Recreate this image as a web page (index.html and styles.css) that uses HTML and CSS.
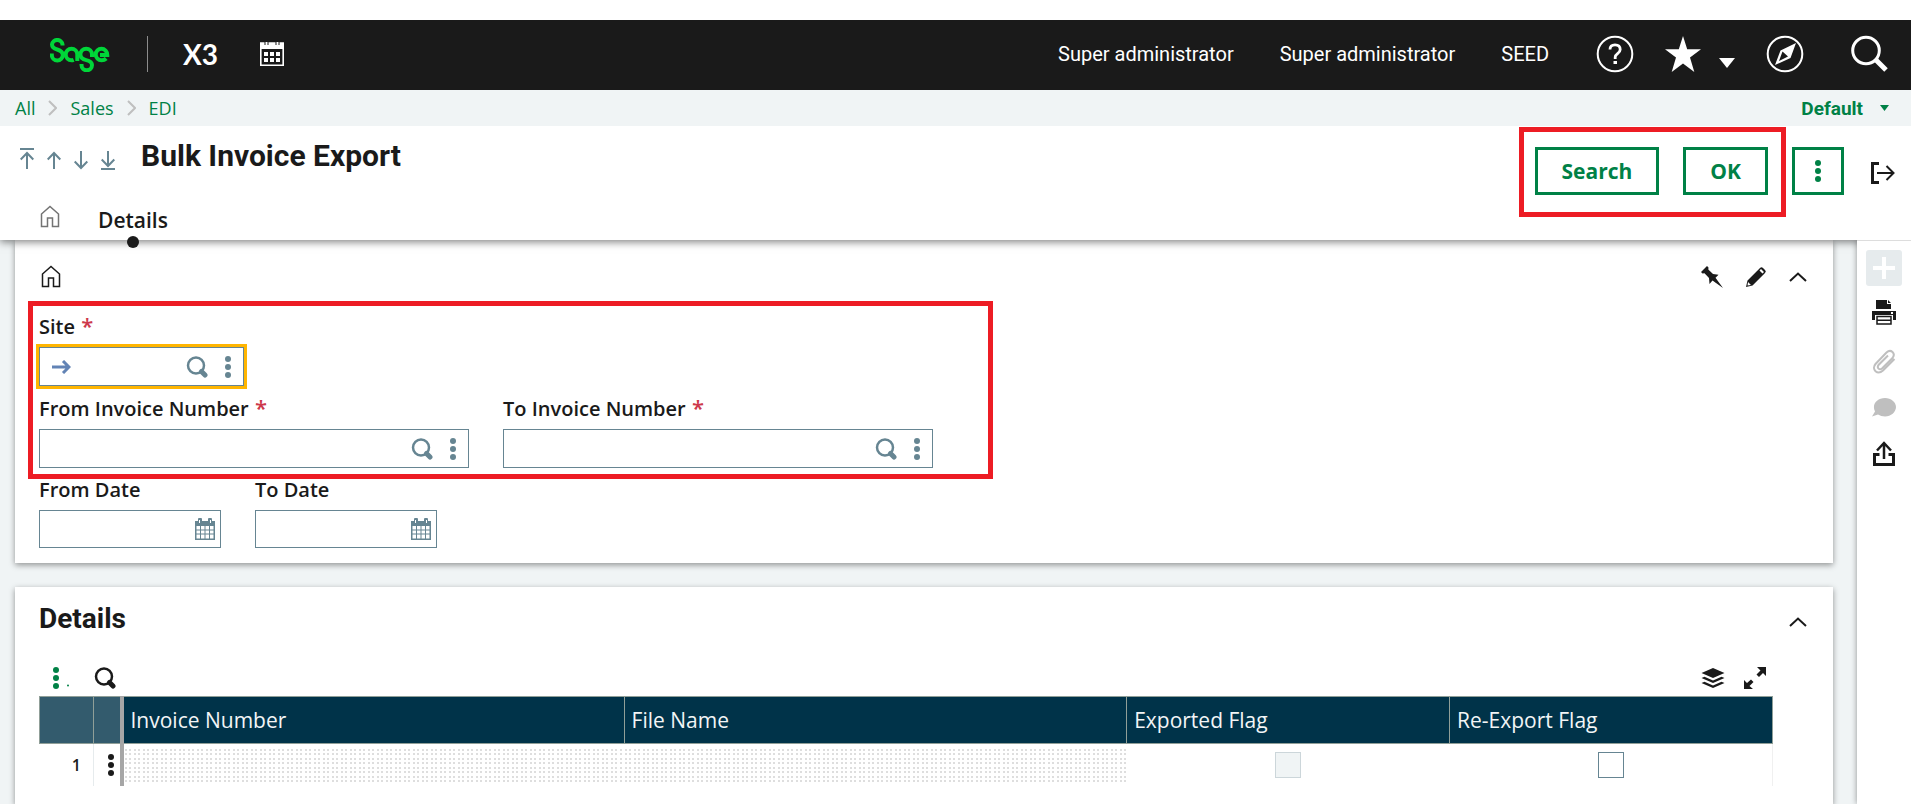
FILE: index.html
```html
<!DOCTYPE html>
<html lang="en">
<head>
  <meta charset="UTF-8" />
  <title>Bulk Invoice Export</title>
  <meta name="viewport" content="width=device-width, initial-scale=1" />
  <link rel="stylesheet" href="styles.css">
</head>
<body>

  <svg class="sprite" aria-hidden="true">
    <symbol id="i-dots" viewBox="0 0 6 22">
      <circle cx="3" cy="3" r="3" /><circle cx="3" cy="11" r="3" /><circle cx="3" cy="19" r="3" />
    </symbol>
    <symbol id="i-search" viewBox="0 0 22 22">
      <circle cx="10" cy="9.500" r="8" fill="none" stroke="currentColor" stroke-width="2.500" />
      <path d="M15.500 15.500l3.500 3.500" stroke="currentColor" stroke-width="5" stroke-linecap="round" />
    </symbol>
    <symbol id="i-calendar" viewBox="0 0 20 22">
      <path d="M0 3h3V1.500a1.500 1.500 0 0 1 4 0V3h6V1.500a1.500 1.500 0 0 1 4 0V3h3v19H0z" />
      <path d="M4.500 2v3M15.500 2v3" stroke="#fff" />
      <path d="M1.500 8h17v12.500h-17z" fill="#fff" />
      <path d="M1 12h18M1 16h18M5.500 8v13M10 8v13M14.500 8v13" stroke="currentColor" fill="none" />
    </symbol>
    <symbol id="i-home" viewBox="0 0 20 23">
      <path d="M1.500 21.500V9L10 1.500 18.500 9v12.500h-6V13h-5v8.500z" fill="none" stroke="currentColor" stroke-width="1.500" />
    </symbol>
    <symbol id="i-chevron" viewBox="0 0 18 10">
      <path d="M1 9l8-7.500L17 9" fill="none" stroke="currentColor" stroke-width="2" />
    </symbol>
  </svg>

  <header class="topbar">
    <svg class="logo" width="60" height="34" viewBox="0 0 60 34" role="img" aria-label="Sage">
      <path d="M12.500 7.500V6.500A5.300 5.300 0 0 0 2 6.500C2 9.500 4 10.500 7.200 11.500 10.500 12.500 12.800 14 12.800 17A5.500 5.500 0 0 1 1.800 17V15.500" />
      <path d="M27.300 23V16.500a5.800 5.800 0 1 0-5.800 5.800c.8 0 1.500-.2 2.200-.5" />
      <path d="M42 19v-2.500a5.800 5.800 0 0 0-11.600 0c0 3.500 2.500 5 5.800 5.600 3.500.8 5.800 2.200 5.800 5a5.200 5.200 0 0 1-10.500 0v-1" />
      <path d="M50 17h7.300c0-3.500-2.600-6.300-5.800-6.300a5.800 5.800 0 1 0 0 11.600c2 0 3.500-.6 4.700-1.800" />
    </svg>
    <span class="product">X3</span>
    <button class="icon-btn" type="button" aria-label="Calendar">
      <svg width="24" height="24" viewBox="0 0 24 24">
        <path d="M.8 1h22.400v22.200H.8z" fill="none" stroke="#fff" stroke-width="1.600" />
        <path d="M0 1h24v6H0z" />
        <path d="M6.500 0v3M17.500 0v3" stroke="#1a1a1a" stroke-width="4" />
        <path d="M6.500 0v3M17.500 0v3" stroke="#fff" stroke-width="2" />
        <path d="M4 10h4v4H4zM10 10h4v4h-4zM16 10h4v4h-4zM4 16h4v4H4zM10 16h4v4h-4zM16 16h4v4h-4z" />
      </svg>
    </button>
    <nav class="user-menu">
      <a href="#">Super administrator</a>
      <a href="#">Super administrator</a>
      <a href="#">SEED</a>
    </nav>
    <div class="top-icons">
      <button class="icon-btn" type="button" aria-label="Help">
        <svg width="38" height="38" viewBox="0 0 38 38" fill="none" stroke="#fff" stroke-width="2">
          <circle cx="19" cy="19" r="17.300" />
          <path d="M14 14.500c0-3.200 2-4.700 5-4.700s5.200 1.700 5.200 4.700c0 4-5 4-5 7.500v2" stroke-width="2.800" />
          <path d="M17.500 26h3.500v3h-3.500z" fill="#fff" stroke="none" />
        </svg>
      </button>
      <button class="icon-btn favourites" type="button" aria-label="Favourites">
        <svg width="36" height="36" viewBox="0 0 36 36">
          <path d="M18 0l4.200 13.300H36L25 21.500 29.300 36 18 27.500 6.700 36 11 21.500 0 13.300h13.800z" />
        </svg>
        <svg class="caret" width="16" height="10" viewBox="0 0 16 10"><path d="M0 0h16L8 10z" /></svg>
      </button>
      <button class="icon-btn" type="button" aria-label="Navigate">
        <svg width="38" height="38" viewBox="0 0 38 38">
          <circle cx="19" cy="19" r="17.300" fill="none" stroke="#fff" stroke-width="2" />
          <path d="M30 8L24.500 23 9 30 14.500 15.500zM22 21.500l-5.500-5L13 26z" fill-rule="evenodd" />
        </svg>
      </button>
      <button class="icon-btn search-all" type="button" aria-label="Search everywhere">
        <svg width="38" height="38" viewBox="0 0 38 38" fill="none" stroke="#fff">
          <circle cx="16" cy="15.500" r="13.300" stroke-width="3" />
          <path d="M26 25l10 10" stroke-width="5" />
        </svg>
      </button>
    </div>
  </header>

  <div class="crumb-bar">
    <nav class="crumbs" aria-label="Breadcrumb">
      <a href="#">All</a>
      <svg width="9" height="16" viewBox="0 0 9 16"><path d="M1 1l7 7-7 7" /></svg>
      <a href="#">Sales</a>
      <svg width="9" height="16" viewBox="0 0 9 16"><path d="M1 1l7 7-7 7" /></svg>
      <a href="#">EDI</a>
    </nav>
    <button class="view-btn" type="button">
      Default
      <svg width="9" height="6" viewBox="0 0 9 6"><path d="M0 0h9L4.500 6z" /></svg>
    </button>
  </div>

  <section class="page-header">
    <div class="title-row">
      <div class="record-nav">
        <button class="icon-btn" type="button" aria-label="First record">
          <svg width="14" height="22" viewBox="0 0 14 22"><path d="M0 1h14M7 21V5M.7 11.500L7 5l6.300 6.500" /></svg>
        </button>
        <button class="icon-btn" type="button" aria-label="Previous record">
          <svg width="14" height="22" viewBox="0 0 14 22"><path d="M7 21V5M.7 11.500L7 5l6.300 6.500" /></svg>
        </button>
        <button class="icon-btn" type="button" aria-label="Next record">
          <svg width="14" height="22" viewBox="0 0 14 22"><path d="M7 3v17M.7 13.500L7 20l6.300-6.500" /></svg>
        </button>
        <button class="icon-btn" type="button" aria-label="Last record">
          <svg width="14" height="22" viewBox="0 0 14 22"><path d="M0 21h14M7 3v15M.7 11.500L7 18l6.300-6.500" /></svg>
        </button>
      </div>
      <h1>Bulk Invoice Export</h1>
    </div>
    <nav class="tabs">
      <a class="home" href="#general" aria-label="General">
        <svg width="20" height="23"><use href="#i-home" /></svg>
      </a>
      <a class="active" href="#details">Details</a>
    </nav>
    <div class="actions">
      <div class="main-actions marked">
        <button class="btn" type="button">Search</button>
        <button class="btn" type="button">OK</button>
      </div>
      <button class="btn more" type="button" aria-label="More actions">
        <svg width="6" height="22"><use href="#i-dots" /></svg>
      </button>
      <button class="icon-btn" type="button" aria-label="Exit">
        <svg width="24" height="22" viewBox="0 0 24 22" fill="none" stroke="#1a1a1a">
          <path d="M8 1.500H1.500v19H8" stroke-width="3" />
          <path d="M6 11h16M15.500 4l7 7-7 7" stroke-width="2" />
        </svg>
      </button>
    </div>
  </section>

  <div class="workspace">
    <main class="content">
      <section class="card" id="general">
        <div class="card-head">
          <svg width="20" height="23"><use href="#i-home" /></svg>
          <div class="card-tools">
            <button class="icon-btn" type="button" aria-label="Pin">
              <svg width="22" height="22" viewBox="0 0 22 22">
                <path d="M0 6L6 0l1.500 1.500-.2 2L12 8l5.500.8-3 3L22 22 11.500 14.500l-3 3.500L8 12 3.500 7.300l-2 .2z" />
              </svg>
            </button>
            <button class="icon-btn" type="button" aria-label="Edit">
              <svg width="22" height="22" viewBox="0 0 22 22">
                <path d="M1 21l1.500-6.500L15 2a2 2 0 0 1 3 0l2 2a2 2 0 0 1 0 3L7.500 19.500z" />
                <path d="M14.500 4.500l3 3M17.500 7.500l1.500-1.500-3-3-1.500 1.500zM3 16l3 3-3.500 .5z" fill="#fff" />
              </svg>
            </button>
            <button class="icon-btn" type="button" aria-label="Collapse">
              <svg width="18" height="10"><use href="#i-chevron" /></svg>
            </button>
          </div>
        </div>

        <form class="criteria">
          <div class="required-fields marked">
            <div class="field">
              <label for="site">Site <span class="req">*</span></label>
              <div class="control site focused">
                <svg class="jump" width="19" height="14" viewBox="0 0 19 14"><path d="M0 7h17M11 1l6 6-6 6" /></svg>
                <input type="text" id="site" />
                <button class="icon-btn" type="button" aria-label="Find site"><svg width="22" height="22"><use href="#i-search" /></svg></button>
                <button class="icon-btn" type="button" aria-label="Site options"><svg width="6" height="22"><use href="#i-dots" /></svg></button>
              </div>
            </div>
            <div class="field-row">
              <div class="field">
                <label for="fromInvoice">From Invoice Number <span class="req">*</span></label>
                <div class="control invoice">
                  <input type="text" id="fromInvoice" />
                  <button class="icon-btn" type="button" aria-label="Find first invoice"><svg width="22" height="22"><use href="#i-search" /></svg></button>
                  <button class="icon-btn" type="button" aria-label="First invoice options"><svg width="6" height="22"><use href="#i-dots" /></svg></button>
                </div>
              </div>
              <div class="field">
                <label for="toInvoice">To Invoice Number <span class="req">*</span></label>
                <div class="control invoice">
                  <input type="text" id="toInvoice" />
                  <button class="icon-btn" type="button" aria-label="Find last invoice"><svg width="22" height="22"><use href="#i-search" /></svg></button>
                  <button class="icon-btn" type="button" aria-label="Last invoice options"><svg width="6" height="22"><use href="#i-dots" /></svg></button>
                </div>
              </div>
            </div>
          </div>
          <div class="field-row">
            <div class="field">
              <label for="fromDate">From Date</label>
              <div class="control date">
                <input type="text" id="fromDate" />
                <button class="icon-btn" type="button" aria-label="Pick from date"><svg width="20" height="22"><use href="#i-calendar" /></svg></button>
              </div>
            </div>
            <div class="field">
              <label for="toDate">To Date</label>
              <div class="control date">
                <input type="text" id="toDate" />
                <button class="icon-btn" type="button" aria-label="Pick to date"><svg width="20" height="22"><use href="#i-calendar" /></svg></button>
              </div>
            </div>
          </div>
        </form>
      </section>

      <section class="card details" id="details">
        <div class="card-head">
          <h2>Details</h2>
          <button class="icon-btn" type="button" aria-label="Collapse">
            <svg width="18" height="10"><use href="#i-chevron" /></svg>
          </button>
        </div>
        <div class="grid-tools">
          <button class="icon-btn grid-menu" type="button" aria-label="Grid options">
            <svg width="16" height="22" viewBox="0 0 16 22">
              <circle cx="3" cy="3" r="3" /><circle cx="3" cy="11" r="3" /><circle cx="3" cy="19" r="3" /><circle cx="15" cy="18.500" r="1" />
            </svg>
          </button>
          <button class="icon-btn" type="button" aria-label="Search grid"><svg width="22" height="22"><use href="#i-search" /></svg></button>
          <button class="icon-btn layers" type="button" aria-label="Layers">
            <svg width="24" height="22" viewBox="0 0 24 22">
              <path d="M12 1l11.500 5L12 11 .5 6zM.5 11l3-1.300L12 13.500l8.500-3.800 3 1.300L12 16zM.5 16l3-1.300L12 18.500l8.500-3.800 3 1.300L12 21z" />
            </svg>
          </button>
          <button class="icon-btn" type="button" aria-label="Full screen">
            <svg width="22" height="22" viewBox="0 0 22 22">
              <path d="M13 0h9v9l-3-3-4 4-2.500-2.500 4-4zM9 22H0v-9l3 3 4-3.500L9.500 15l-4 4z" />
            </svg>
          </button>
        </div>

        <table>
          <colgroup>
            <col class="c-num"><col class="c-menu"><col class="c-invoice"><col class="c-file"><col class="c-flag"><col class="c-flag">
          </colgroup>
          <thead>
            <tr>
              <th class="side"></th>
              <th class="side frozen"></th>
              <th scope="col">Invoice Number</th>
              <th scope="col">File Name</th>
              <th scope="col">Exported Flag</th>
              <th scope="col">Re-Export Flag</th>
            </tr>
          </thead>
          <tbody>
            <tr>
              <td class="num">1</td>
              <td class="frozen">
                <button class="icon-btn" type="button" aria-label="Row options"><svg width="6" height="22"><use href="#i-dots" /></svg></button>
              </td>
              <td><div class="locked"></div></td>
              <td><div class="locked"></div></td>
              <td class="flag"><input type="checkbox" aria-label="Exported Flag" disabled /></td>
              <td class="flag last"><input type="checkbox" aria-label="Re-Export Flag" /></td>
            </tr>
          </tbody>
        </table>
      </section>
    </main>

    <aside class="side-tools">
      <button class="icon-btn add" type="button" aria-label="New" disabled>
        <svg width="22" height="22" viewBox="0 0 22 22"><path d="M9 0h4v9h9v4h-9v9H9v-9H0V9h9z" /></svg>
      </button>
      <button class="icon-btn" type="button" aria-label="Print">
        <svg width="24" height="25" viewBox="0 0 24 25">
          <path d="M4 0h11v4h4v5H4zM16 0l3 3h-3zM0 11h24v9h-3v-5H3v5H0z" />
          <path d="M19 12h2v2h-2z" fill="#fff" />
          <path d="M5 16.500h14V24H5zM5 20.200h14" fill="none" stroke="currentColor" stroke-width="1.500" />
        </svg>
      </button>
      <button class="icon-btn" type="button" aria-label="Attachments" disabled>
        <svg width="24" height="25" viewBox="0 0 24 25" fill="none" stroke="currentColor" stroke-width="2">
          <path d="M22.500 10L11 21.500c-5.500 5-12-1-7.500-6.500L14.500 3.500c4.500-4 9.500 1 6 5.500L10 19.500c-2.500 2-5.500-.5-3.500-3.500L16 6.500" />
        </svg>
      </button>
      <button class="icon-btn" type="button" aria-label="Comments" disabled>
        <svg width="24" height="19" viewBox="0 0 24 19">
          <path d="M13 0c6 0 11 4 11 9s-5 9.500-11 9.500c-2.500 0-5-.7-7-2L0 18.500l3-5C-.5 6.500 5 0 13 0z" />
        </svg>
      </button>
      <button class="icon-btn" type="button" aria-label="Share">
        <svg width="22" height="25" viewBox="0 0 22 25" fill="none" stroke="currentColor">
          <path d="M6.500 13.500h-5v10h19v-10h-5" stroke-width="3" />
          <path d="M11 18V3M4 9.500L11 2l7 7.500" stroke-width="2.500" />
        </svg>
      </button>
    </aside>
  </div>

</body>
</html>
```
FILE: styles.css
```css
*, *::before, *::after { box-sizing: border-box; }
html, body { margin: 0; padding: 0; }
body {
  display: flex; flex-direction: column;
  min-height: 100vh; padding-top: 20px;
  background: #fff; color: #1a1a1a; fill: currentColor;
  font-family: "Open Sans", "Noto Sans", sans-serif;
  font-size: 18px;
}
a { color: inherit; text-decoration: none; }
svg { display: block; flex: none; }
.sprite { position: absolute; width: 0; height: 0; }
.icon-btn {
  display: flex; align-items: center;
  padding: 0; border: 0; background: none;
  color: inherit; cursor: pointer;
}

/* top bar */
.topbar {
  display: flex; align-items: center;
  height: 70px; padding: 0 23px 2px 50px;
  background: #1a1a1a; color: #fff;
  font-family: Roboto, sans-serif;
}
.topbar .logo { fill: none; stroke: #00d639; stroke-width: 4; margin-top: 2px; }
.product {
  display: flex; align-items: center;
  height: 36px; margin: 0 42px 0 37px; padding-left: 35px;
  border-left: 1px solid #8c8c8c;
  font-family: Lato, sans-serif;
  font-size: 28px; font-weight: 700;
}
.user-menu { display: flex; gap: 46px; margin-left: auto; font-size: 20px; }
.top-icons { display: flex; align-items: center; margin-left: 47px; gap: 31px; }
.favourites { gap: 18px; }
.favourites .caret { margin-top: 18px; }
.search-all { margin-left: 15px; }

/* breadcrumb */
.crumb-bar {
  display: flex; align-items: center; justify-content: space-between;
  position: relative; z-index: 2;
  height: 36px; padding: 0 22px 0 15px;
  background: #f0f4f5; color: #008146;
}
.crumbs { display: flex; align-items: center; gap: 13px; }
.crumbs svg { fill: none; stroke: #bfbfbf; stroke-width: 2; }
.view-btn {
  display: flex; align-items: center; gap: 17px;
  padding: 0; border: 0; background: none; color: inherit;
  font-family: Roboto, sans-serif; font-size: 19px; font-weight: 700;
}

/* page header */
.page-header {
  display: grid; grid-template-columns: 1fr auto;
  position: relative; z-index: 1;
  height: 114px;
  background: #fff;
  box-shadow: 0 2px 8px rgba(0, 0, 0, 0.5);
}
.title-row { display: flex; align-items: center; gap: 26px; height: 60px; padding-left: 20px; }
.record-nav { display: flex; gap: 13px; padding-top: 6px; color: #668592; }
.record-nav svg { fill: none; stroke: currentColor; stroke-width: 2; }
h1, h2 { margin: 0; font-family: Roboto, sans-serif; line-height: 36px; font-weight: 700; }
h1 { font-size: 30px; }
h2 { font-size: 28px; }
.tabs { grid-row: 2; display: flex; align-items: center; gap: 38px; height: 54px; padding-left: 40px; color: #737373; }
.tabs .home { padding-top: 7px; }
.tabs .active {
  display: flex; align-items: center;
  position: relative; height: 54px; padding-top: 14px;
  color: #1a1a1a; font-size: 21px; font-weight: 600;
}
.tabs .active::after {
  content: ""; position: absolute; bottom: -8px; left: 50%;
  width: 12px; height: 12px; margin-left: -6px;
  border-radius: 50%; background: #1a1a1a;
}
.actions {
  grid-column: 2; grid-row: 1 / 3;
  display: flex; align-items: center; gap: 24px;
  height: 48px; margin: 21px 16px 0 0;
}
.actions > .icon-btn { margin-left: 3px; padding-top: 4px; }
.main-actions { display: flex; gap: 24px; }
.btn {
  display: flex; align-items: center;
  height: 48px; padding: 0 24px;
  border: 3px solid #008146; background: #fff; color: #008146;
  font-family: inherit; font-size: 21px; font-weight: 700;
  cursor: pointer;
}
.btn.more { padding: 0 20px; }
.marked { position: relative; }
.marked::after {
  content: ""; position: absolute;
  border: 5px solid #ed1c24; pointer-events: none;
}
.main-actions::after { inset: -20px -18px -22px -16px; }
.required-fields::after { inset: -13px auto -11px -11px; width: 965px; }

/* workspace */
.workspace { display: flex; flex: 1; background: #f0f4f5; }
.content { display: flex; flex-direction: column; flex: 1; gap: 24px; padding: 0 24px 0 15px; }
.card {
  padding: 0 24px 15px;
  background: #fff;
  box-shadow: 0 2px 6px rgba(0, 0, 0, 0.4);
}
.card.details { flex: 1; }
.card-head { display: flex; align-items: center; justify-content: space-between; padding-right: 2px; }
#general .card-head { align-items: flex-end; height: 74px; padding: 0 2px 26px; }
.card-tools { display: flex; align-items: center; gap: 22px; }
.criteria { display: flex; flex-direction: column; gap: 9px; }
.required-fields { display: flex; flex-direction: column; gap: 10px; }
.field-row { display: flex; gap: 34px; }
.field label { display: block; margin-bottom: 7px; line-height: 26px; font-size: 20px; font-weight: 600; }
.req { margin-left: 1px; color: #cd384b; font-size: 22px; line-height: 20px; }
.control {
  display: flex; align-items: center; gap: 17px;
  height: 39px; padding: 0 12px;
  border: 1px solid #668592; background: #fff; color: #668592;
}
.control input { flex: 1; min-width: 0; height: 100%; padding: 0; border: 0; outline: 0; background: none; font: inherit; }
.control .jump { fill: none; stroke: #6283b5; stroke-width: 3; }
.site { width: 205px; }
.invoice { width: 430px; }
.date { width: 182px; height: 38px; padding-right: 5px; }
.focused { outline: 3px solid #ffb500; }

/* details grid */
.details .card-head { height: 72px; padding-bottom: 8px; }
.details .card-head .icon-btn { padding-top: 6px; }
.grid-tools { display: flex; align-items: center; gap: 25px; height: 37px; padding: 0 43px 0 14px; }
.grid-menu { color: #008146; }
.layers { margin-left: auto; }
.grid-tools .layers + .icon-btn { margin-left: -6px; }
table { width: calc(100% - 36px); border-collapse: collapse; table-layout: fixed; }
.c-num { width: 54px; }
.c-menu { width: 28px; }
.c-invoice, .c-file { width: 29%; }
th {
  height: 47px; padding: 0 7px;
  border: 1px solid #909f98;
  background: #003349; color: #f2f5f6;
  font-size: 21px; font-weight: 400; line-height: 28px; text-align: left;
}
th.side { background: #335b6d; }
th.frozen, td.frozen { border-right: 4px solid #a6a6a6; }
td { height: 42px; padding: 0; }
td.num { padding-right: 12px; border-right: 1px solid #e6ebed; font-size: 16px; font-weight: 600; text-align: right; }
td.frozen .icon-btn { margin-left: auto; padding-right: 6px; }
.locked {
  --dot: radial-gradient(circle at 1px 1px, #dedede 1px, transparent 1px);
  height: 34px;
  background-image: var(--dot), var(--dot), var(--dot), var(--dot);
  background-position: 1px 1px, 5px 1px, 1px 5px, 5px 5px;
  background-size: 9px 9px;
}
.flag { text-align: center; }
.flag.last { border-right: 1px solid #f0f0f0; }
.flag input {
  appearance: none; display: block;
  width: 26px; height: 26px; margin: 0 auto;
  border: 1px solid #668592; background: #fff;
}
.flag input:disabled { border-color: #ccd6da; background: #f0f4f5; }

/* right-hand tools */
.side-tools {
  display: flex; flex-direction: column; align-items: center; gap: 24px;
  position: relative; z-index: 1;
  width: 54px; padding-top: 9px;
  border-top: 1px solid #ddd;
  background: #fff;
  box-shadow: 0 0 6px rgba(0, 0, 0, 0.4);
  clip-path: inset(0 0 0 -8px);
}
.side-tools .icon-btn:disabled { color: #bfbfbf; }
.side-tools .add {
  justify-content: center;
  width: 36px; height: 36px; margin-bottom: -10px;
  border-radius: 3px; background: #e6ebed;
}
.side-tools .add:disabled { color: #fff; }
```
